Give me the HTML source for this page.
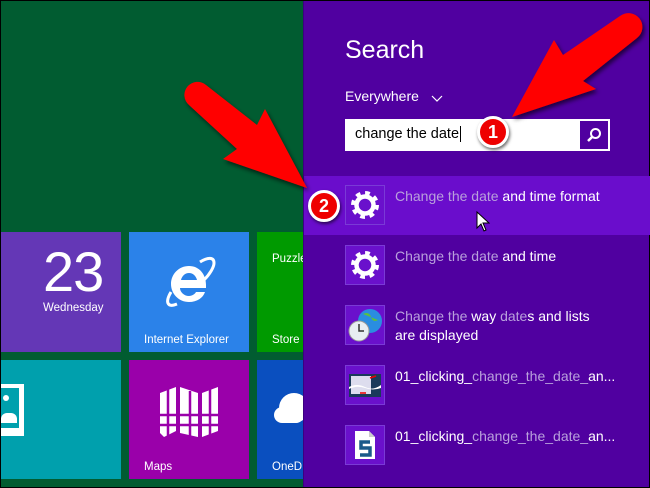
<!DOCTYPE html>
<html><head><meta charset="utf-8"><style>
*{margin:0;padding:0;box-sizing:border-box}
body{width:650px;height:488px;overflow:hidden;background:#000;font-family:"Liberation Sans",sans-serif;position:relative}
#bg{position:absolute;left:1px;top:1px;width:648px;height:486px;background:#015c31}
.t{position:absolute;color:#fff;font-size:11.5px}
.t span{position:absolute;left:15px;bottom:6px}
#panel{position:absolute;left:303px;top:1px;width:346px;height:486px;background:#5000a0;border-left:1px solid #3c0080}
.row{position:absolute;left:0;width:346px;height:59px}
.ic{position:absolute;left:41px;width:40px;height:40px;background:#6a10cc;border:1px solid #7a3ad6}
.tx{position:absolute;left:91px;font-size:14px;color:#fff;line-height:19px}
.d{color:#b9a0dc}
.badge{position:absolute;width:32px;height:32px;border-radius:50%;background:#e00;border:3px solid #fff;color:#fff;font-weight:bold;font-size:18px;text-align:center;line-height:26px;box-shadow:1px 2px 3px rgba(0,0,0,.6)}
</style></head><body>
<div id="bg"></div>
<div class="t" style="left:1px;top:232px;width:120px;height:120px;background:#6437b6">
<div style="position:absolute;left:42px;top:8px;font-size:56px;line-height:64px;letter-spacing:-1px">23</div>
<div style="position:absolute;left:42px;top:70px;font-size:11.5px">Wednesday</div></div>
<div class="t" style="left:129px;top:232px;width:120px;height:120px;background:#2b82e9">
<svg style="position:absolute;left:33px;top:20px" width="55" height="60" viewBox="0 0 55 60"><path d="M27 14c-10 0-18 8-18 18s8 18 18 18c8 0 14-4 16-10h-9c-1 2-4 4-7 4-5 0-9-4-9-8h26v-3c0-11-7-19-17-19zm-8 14c1-4 4-7 8-7s7 3 8 7z" fill="#fff"/><path d="M38 10c8-5 14-5 14 1 0 4-4 11-10 17" stroke="#fff" stroke-width="3" fill="none"/><path d="M9 40c-6 10-4 16 6 12" stroke="#fff" stroke-width="3" fill="none"/></svg>
<span>Internet Explorer</span></div>
<div class="t" style="left:257px;top:232px;width:46px;height:120px;background:#009a00">
<div style="position:absolute;left:15px;top:21px">Puzzle</div><span>Store</span></div>
<div class="t" style="left:1px;top:360px;width:120px;height:119px;background:#00a0ad">
<div style="position:absolute;left:0;top:24px;width:23px;height:52px;background:#fff"><div style="position:absolute;left:0;top:4px;width:18px;height:40px;background:#00a0ad"></div><div style="position:absolute;left:0;top:29px;width:16px;height:10px;background:#fff;border-radius:6px 6px 0 0"></div><div style="position:absolute;left:2px;top:11px;width:6px;height:6px;border-radius:50%;background:#fff"></div></div></div>
<div class="t" style="left:129px;top:360px;width:120px;height:119px;background:#9a00aa">
<svg style="position:absolute;left:29px;top:27px" width="62" height="50" viewBox="0 0 62 50"><path d="M2 6l16-6v44L6 50 2 46zM22 0l18 6v44l-18-4zM44 6l16-6v44l-16 6z" fill="#fff"/><path d="M0 28h62M0 38h62M10 2v48M52 2v48M32 4v46" stroke="#9a00aa" stroke-width="2.5"/></svg>
<span>Maps</span></div>
<div class="t" style="left:257px;top:360px;width:46px;height:119px;background:#0a4fbf">
<div style="position:absolute;left:22px;top:33px;width:30px;height:30px;border-radius:50%;background:#fff"></div>
<div style="position:absolute;left:17px;top:47px;width:30px;height:16px;border-radius:8px;background:#fff"></div>
<span>OneD</span></div>
<div style="position:absolute;left:1px;top:479px;width:302px;height:8px;background:#015c31"></div>

<div id="panel">
<div style="position:absolute;left:41px;top:35px;font-size:25px;color:#fff">Search</div>
<div style="position:absolute;left:41px;top:87px;font-size:14px;color:#fff">Everywhere</div>
<svg style="position:absolute;left:127px;top:94px" width="12" height="8"><path d="M1 1l5 5 5-5" stroke="#fff" stroke-width="1.2" fill="none"/></svg>
<div style="position:absolute;left:41px;top:118px;width:265px;height:32px;background:#fff">
<div style="position:absolute;left:10px;top:7px;font-size:14.5px;color:#000">change the date<span style="border-left:1px solid #000;margin-left:1px"></span></div>
<div style="position:absolute;right:2px;top:2px;width:28px;height:28px;background:#5000a0">
<svg width="28" height="28"><circle cx="15.5" cy="12.5" r="4.5" stroke="#fff" stroke-width="2" fill="none"/><path d="M12.3 15.7L8 20" stroke="#fff" stroke-width="2.5"/></svg></div></div>

<div class="row" style="top:175px;background:#6a0dcc"></div>
<div class="ic" style="top:184px"><svg width="38" height="38" viewBox="0 0 38 38"><circle cx="19" cy="19" r="11" stroke="#fff" stroke-width="6" fill="none" stroke-dasharray="4.3 4.3"/><circle cx="19" cy="19" r="8.5" stroke="#fff" stroke-width="4.5" fill="none"/></svg></div>
<div class="tx" style="top:186px"><span class="d">Change the date</span> and time format</div>
<div class="ic" style="top:244px"><svg width="38" height="38" viewBox="0 0 38 38"><circle cx="19" cy="19" r="11" stroke="#fff" stroke-width="6" fill="none" stroke-dasharray="4.3 4.3"/><circle cx="19" cy="19" r="8.5" stroke="#fff" stroke-width="4.5" fill="none"/></svg></div>
<div class="tx" style="top:246px"><span class="d">Change the date</span> and time</div>
<div class="ic" style="top:304px"><svg width="38" height="38"><circle cx="24" cy="15" r="12" fill="#2a8de0"/><path d="M17 8q6-3 8 3t7 3" fill="#5ac040"/><circle cx="13" cy="25" r="10" fill="#e8eef2" stroke="#999"/><path d="M13 18v7h5" stroke="#333" stroke-width="1.5" fill="none"/></svg></div>
<div class="tx" style="top:306px"><span class="d">Change the</span> way <span class="d">date</span>s and lists<br>are displayed</div>
<div class="ic" style="top:364px"><svg width="38" height="38"><rect x="3" y="8" width="32" height="23" fill="#1a3a5a"/><rect x="5" y="10" width="20" height="18" fill="#dde"/><path d="M3 21q8-4 16 0t16-2v3q-8 3-16 0t-16 1z" fill="#fff"/><path d="M24 12l6-2M14 27h6" stroke="#e00" stroke-width="1.5"/></svg></div>
<div class="tx" style="top:366px">01_clicking_<span class="d">change_the_date_</span>an...</div>
<div class="ic" style="top:424px"><svg width="38" height="38"><path d="M9 5h14l6 6v22H9z" fill="#fff"/><path d="M23 5v6h6" fill="#ccc"/><path d="M24 16h-9v6h9v7h-10" stroke="#1a5a8a" stroke-width="3.5" fill="none"/></svg></div>
<div class="tx" style="top:426px">01_clicking_<span class="d">change_the_date_</span>an...</div>
<svg style="position:absolute;left:172px;top:210px" width="14" height="22"><path d="M1 1v16l4-4 3 7 2-1-3-7h6z" fill="#fff" stroke="#000"/></svg>
</div>

<svg style="position:absolute;left:0;top:0" width="650" height="488">
<defs><filter id="sh"><feDropShadow dx="2" dy="3" stdDeviation="2" flood-opacity=".6"/></filter></defs>
<g fill="#f00" filter="url(#sh)">
<path d="M512 117L554 40L563 55L620 16A13 13 0 0 1 637 38L583 81L596 89Z"/>
<path d="M307 188L265 109L257 125L206 85A13 13 0 0 0 189 105L237 149L223 159Z"/>
</g></svg>
<div class="badge" style="left:477px;top:116px">1</div>
<div class="badge" style="left:308px;top:190px">2</div>
</body></html>
